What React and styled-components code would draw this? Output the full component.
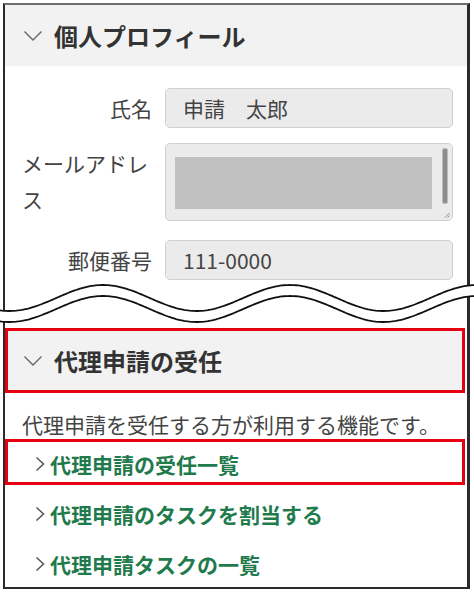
import styled, { createGlobalStyle } from "styled-components";

const GlobalStyle = createGlobalStyle`
  html, body {
    margin: 0;
    background: #fff;
  }
  body {
    font-family: "Noto Sans CJK JP", "Noto Sans", sans-serif;
    color: #333;
  }
`;

const Page = styled.div`
  padding: 3px 0 0 3px;
`;

const Frame = styled.div`
  position: relative;
  width: 467px;
  box-sizing: border-box;
  border: 2px solid #2b2b2b;
  border-top-color: #6e6e6e;
  border-right-width: 3px;
  background: #fff;
`;

const SectionHeader = styled.div`
  display: flex;
  align-items: center;
  gap: 11px;
  height: ${(p) => (p.$marked ? "59px" : "61px")};
  padding-left: ${(p) => (p.$marked ? "15px" : "18px")};
  margin-right: ${(p) => (p.$marked ? "2px" : "0")};
  background: #f2f2f2;
  border: ${(p) => (p.$marked ? "3px solid #e60012" : "none")};
`;

const HeaderTitle = styled.h2`
  margin: 0;
  font-size: 24px;
  font-weight: 700;
  line-height: 1;
  color: #333;
`;

const Form = styled.div`
  padding-top: 22px;
`;

const Row = styled.div`
  display: grid;
  grid-template-columns: 147px 288px;
  column-gap: 13px;
  margin-bottom: ${(p) => p.$gap || 0}px;
`;

const LabelCell = styled.div`
  display: flex;
  justify-content: flex-end;
  padding: 2px 0 0 17px;
  font-size: 21px;
  line-height: 36px;
  color: #444;
`;

const LabelText = styled.span`
  text-align: left;
`;

const Field = styled.div`
  display: flex;
  align-items: center;
  height: 40px;
  box-sizing: border-box;
  padding-left: 17px;
  background: #ebebeb;
  border: 1px solid #d0d0d0;
  border-radius: 5px;
  font-size: 21px;
  color: #444;
`;

const TextBox = styled.div`
  position: relative;
  display: flex;
  align-items: flex-start;
  height: 78px;
  box-sizing: border-box;
  padding: 4px 0 0 9px;
  background: #ebebeb;
  border: 1px solid #d0d0d0;
  border-radius: 5px;
`;

const Masked = styled.div`
  width: 257px;
  height: 52px;
  margin-top: 9px;
  background: #c0c0c0;
`;

const ScrollThumb = styled.div`
  width: 4px;
  height: 54px;
  margin-left: 10px;
  background: #8c8c8c;
  border: 1px solid #bdbdbd;
  border-radius: 2px;
`;

const Grip = styled.svg`
  position: absolute;
  right: 2px;
  bottom: 2px;
`;

const Break = styled.div`
  position: relative;
  height: 48px;
`;

const WaveSvg = styled.svg`
  position: absolute;
  top: 0;
  left: -5px;
  z-index: 1;
`;

const Desc = styled.p`
  margin: 0;
  padding: 16px 0 0 17px;
  font-size: 21px;
  line-height: 30px;
  color: #444;
`;

const LinkList = styled.div`
  display: flex;
  flex-direction: column;
  gap: 4px;
  padding-bottom: 2px;
`;

const LinkItem = styled.a`
  display: flex;
  align-items: center;
  gap: 5px;
  width: 460px;
  height: 46px;
  box-sizing: border-box;
  padding: 4px 0 0 27px;
  border: 3px solid ${(p) => (p.$marked ? "#e60012" : "transparent")};
  font-size: 21px;
  font-weight: 700;
  color: #1f7a4c;
  text-decoration: none;
`;

const ChevronDown = () => (
  <svg width="20" height="12" viewBox="0 0 20 12">
    <polyline points="1.5,1.5 10,10 18.5,1.5" fill="none" stroke="#666" strokeWidth="1.4" />
  </svg>
);

const ChevronRight = () => (
  <svg width="10" height="16" viewBox="0 0 10 16">
    <polyline points="1.5,1.5 8.5,8 1.5,14.5" fill="none" stroke="#555" strokeWidth="1.5" />
  </svg>
);

const wave = (offset) => {
  const pts = [];
  for (let x = 0; x <= 474; x += 2) {
    const y = 18 + offset - 13 * Math.cos((2 * Math.PI * (x - 103)) / 187);
    pts.push([x, y.toFixed(2)]);
  }
  return pts;
};

const WaveBreak = () => {
  const top = wave(0);
  const bottom = wave(11);
  const line = (pts) => "M" + pts.map((p) => p.join(",")).join(" L");
  const fill = line(top) + " L" + bottom.slice().reverse().map((p) => p.join(",")).join(" L") + " Z";
  return (
    <Break>
      <WaveSvg width="474" height="48" viewBox="0 0 474 48">
        <path d={fill} fill="#fff" />
        <path d={line(top)} fill="none" stroke="#111" strokeWidth="1.8" />
        <path d={line(bottom)} fill="none" stroke="#111" strokeWidth="1.8" />
      </WaveSvg>
    </Break>
  );
};

const links = [
  { label: "代理申請の受任一覧", marked: true },
  { label: "代理申請のタスクを割当する" },
  { label: "代理申請タスクの一覧" },
];

export default function App() {
  return (
    <>
      <GlobalStyle />
      <Page>
        <Frame>
          <SectionHeader>
            <ChevronDown />
            <HeaderTitle>個人プロフィール</HeaderTitle>
          </SectionHeader>
          <Form>
            <Row $gap={15}>
              <LabelCell>
                <LabelText>氏名</LabelText>
              </LabelCell>
              <Field>申請　太郎</Field>
            </Row>
            <Row $gap={19}>
              <LabelCell>
                <LabelText>メールアドレス</LabelText>
              </LabelCell>
              <TextBox>
                <Masked />
                <ScrollThumb />
                <Grip width="6" height="6" viewBox="0 0 6 6">
                  <line x1="5.5" y1="1" x2="1" y2="5.5" stroke="#777" strokeWidth="0.8" />
                  <line x1="5.5" y1="3.5" x2="3.5" y2="5.5" stroke="#777" strokeWidth="0.8" />
                </Grip>
              </TextBox>
            </Row>
            <Row>
              <LabelCell>
                <LabelText>郵便番号</LabelText>
              </LabelCell>
              <Field>111-0000</Field>
            </Row>
          </Form>
          <WaveBreak />
          <SectionHeader $marked>
            <ChevronDown />
            <HeaderTitle>代理申請の受任</HeaderTitle>
          </SectionHeader>
          <Desc>代理申請を受任する方が利用する機能です。</Desc>
          <LinkList>
            {links.map((l) => (
              <LinkItem key={l.label} href="#" $marked={l.marked}>
                <ChevronRight />
                {l.label}
              </LinkItem>
            ))}
          </LinkList>
        </Frame>
      </Page>
    </>
  );
}
